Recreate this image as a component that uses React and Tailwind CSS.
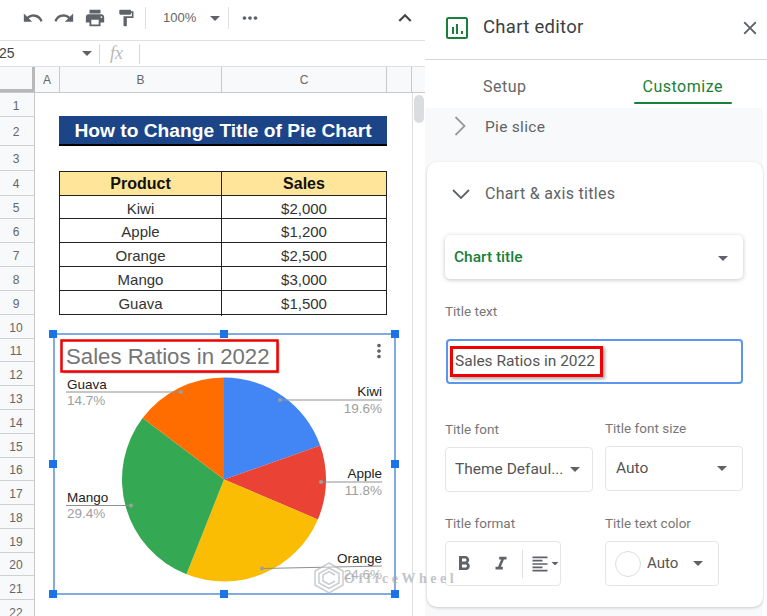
import React from "react";
import {
  MdUndo,
  MdRedo,
  MdPrint,
  MdFormatPaint,
  MdMoreHoriz,
  MdKeyboardArrowUp,
  MdClose,
  MdFormatBold,
  MdFormatItalic,
  MdFormatAlignLeft,
  MdMoreVert,
} from "react-icons/md";

const rowHeights = [24, 29, 25, 25, 23, 24, 24, 24, 24, 24, 23, 24, 24, 24, 24, 23, 24, 24, 24, 23, 24, 24];

const products = [
  ["Kiwi", "$2,000", "h-[23px]"],
  ["Apple", "$1,200", "h-[24px]"],
  ["Orange", "$2,500", "h-[24px]"],
  ["Mango", "$3,000", "h-[24px]"],
  ["Guava", "$1,500", "h-[23px]"],
];

const slices = [
  { share: 19.6, color: "#4285f4" },
  { share: 11.8, color: "#ea4335" },
  { share: 24.6, color: "#fbbc04" },
  { share: 29.3, color: "#34a853" },
  { share: 14.7, color: "#ff6d01" },
];

const Caret = ({ className = "" }) => (
  <svg width="10" height="5" viewBox="0 0 10 5" className={className}>
    <path d="M0 0h10L5 5z" fill="#5f6368" />
  </svg>
);

const slicePaths = () => {
  const cx = 224;
  const cy = 479.5;
  const r = 102;
  let total = 0;
  return slices.map((s) => {
    const a0 = (total / 100) * 2 * Math.PI;
    total += s.share;
    const a1 = (total / 100) * 2 * Math.PI;
    const large = s.share > 50 ? 1 : 0;
    const x0 = cx + r * Math.sin(a0);
    const y0 = cy - r * Math.cos(a0);
    const x1 = cx + r * Math.sin(a1);
    const y1 = cy - r * Math.cos(a1);
    return { d: `M${cx} ${cy}L${x0} ${y0}A${r} ${r} 0 ${large} 1 ${x1} ${y1}Z`, color: s.color };
  });
};

const Leader = ({ points, dot }) => (
  <g>
    <polyline points={points} fill="none" stroke="#8f8f8f" strokeWidth="1" />
    <circle cx={dot[0]} cy={dot[1]} r="2" fill="#9e9e9e" />
  </g>
);

const PieChart = () => (
  <svg
    className="absolute left-[45px] top-[258px]"
    width="360"
    height="280"
    viewBox="45 325 360 280"
    style={{ fontFamily: "'Liberation Sans', Arial, sans-serif" }}
  >
    <rect x="54" y="334" width="341" height="260" fill="#fff" stroke="#5b8fd6" strokeWidth="1.5" />
    {slicePaths().map((s) => (
      <path key={s.color} d={s.d} fill={s.color} />
    ))}

    <rect x="63.5" y="342.5" width="216" height="31" fill="#000" opacity="0.25" />
    <rect x="61.5" y="340.5" width="216" height="31" fill="#fff" stroke="#f00000" strokeWidth="2.5" />
    <text x="66" y="364" fontSize="22.2" fill="#757575">Sales Ratios in 2022</text>

    <Leader points="66,392 181,392" dot={[181, 392]} />
    <Leader points="280,400 382,400" dot={[280, 400]} />
    <Leader points="321,482 382,482" dot={[321, 482]} />
    <Leader points="66,505.5 131,505.5" dot={[131, 505.5]} />
    <Leader points="262,568.5 382,566" dot={[262, 568.5]} />

    <text x="67" y="389" fontSize="13.5" fill="#222">Guava</text>
    <text x="67" y="405" fontSize="13.5" fill="#9e9e9e">14.7%</text>
    <text x="382" y="396" fontSize="13.5" fill="#222" textAnchor="end">Kiwi</text>
    <text x="382" y="413" fontSize="13.5" fill="#9e9e9e" textAnchor="end">19.6%</text>
    <text x="382" y="478" fontSize="13.5" fill="#222" textAnchor="end">Apple</text>
    <text x="382" y="495" fontSize="13.5" fill="#9e9e9e" textAnchor="end">11.8%</text>
    <text x="67" y="502" fontSize="13.5" fill="#222">Mango</text>
    <text x="67" y="518" fontSize="13.5" fill="#9e9e9e">29.4%</text>
    <text x="382" y="563" fontSize="13.5" fill="#222" textAnchor="end">Orange</text>
    <text x="382" y="579" fontSize="13.5" fill="#b5b5b5" textAnchor="end">24.6%</text>

    <g fill="#1a73e8">
      {[53, 224, 395].map((x) =>
        [334, 464, 594].map((y) =>
          x === 224 && y === 464 ? null : <rect key={`${x}-${y}`} x={x - 4} y={y - 4} width="8" height="8" />
        )
      )}
    </g>
    <g transform="translate(-43 0)">
      <MdMoreVert x="411" y="340" size="22" color="#5f6368" />
    </g>
  </svg>
);

const Watermark = () => (
  <div className="absolute left-[312px] top-[562px] flex items-center opacity-70">
    <svg width="34" height="32" viewBox="0 0 34 32" fill="none" stroke="#b4b8bc" strokeWidth="1.5">
      <path d="M17 1l14 8v14l-14 8-14-8V9z" fill="#ffffff" fillOpacity="0.55" />
      <path d="M17 6l10 5.500v9.500l-10 5.500-10-5.500v-9.500z" />
      <path d="M23 13l-6-3.500-6 3.500v6l6 3.500 6-3.500" />
    </svg>
    <span className="-ml-[2px] font-['Liberation_Serif',serif] text-[14px] font-bold tracking-[3.500px] text-[#a9adb1] whitespace-nowrap">
      OfficeWheel
    </span>
  </div>
);

const Sheet = () => (
  <div className="relative h-[549px] overflow-hidden">
    <div className="flex h-[26px] border-b border-[#c8c8c8] text-[12px] text-[#666] bg-[#f8f9fa]">
      <div className="w-[35px] border-r-[3px] border-b-[3px] border-[#b8b8b8]" />
      <div className="w-[25px] border-r border-[#c8c8c8] flex items-center justify-center">A</div>
      <div className="w-[162px] border-r border-[#c8c8c8] flex items-center justify-center">B</div>
      <div className="w-[165px] border-r border-[#c8c8c8] flex items-center justify-center">C</div>
      <div className="w-[25px] border-r border-[#c8c8c8]" />
    </div>

    <div className="flex">
      <div className="w-[35px] bg-[#f8f9fa] border-r border-[#c8c8c8]">
        {rowHeights.map((h, i) => (
          <div
            key={i}
            style={{ height: h }}
            className="flex items-center justify-center border-b border-[#d0d0d0] text-[12px] text-[#666] pr-[2px] pt-[2px]"
          >
            {i + 1}
          </div>
        ))}
      </div>

      <div className="w-[377px] pl-[24px]">
        <div className="h-[23px]" />
        <div className="w-[328px] h-[30px] pt-[2px] bg-[#1c4587] border-b-2 border-black flex items-center justify-center text-[19.200px] font-bold text-white">
          How to Change Title of Pie Chart
        </div>
        <div className="h-[25px]" />
        <div className="w-[328px] border border-[#222] text-[#333]">
          <div className="grid grid-cols-[162px_1fr] h-[24px] bg-[#ffe599] font-bold text-[16px] text-[#111] border-b border-[#222]">
            <div className="border-r border-[#222] flex items-center justify-center">Product</div>
            <div className="flex items-center justify-center">Sales</div>
          </div>
          {products.map(([name, sales, height], i) => (
            <div
              key={name}
              className={`grid grid-cols-[162px_1fr] text-[15px] ${height} ${i < 4 ? "border-b border-[#222]" : ""}`}
            >
              <div className="border-r border-[#222] flex items-center justify-center pt-[2px]">{name}</div>
              <div className="flex items-center justify-center pt-[2px]">{sales}</div>
            </div>
          ))}
        </div>
      </div>

      <div className="w-[13px] border-l border-[#e0e0e0] pl-[1px] pt-[2px]">
        <div className="w-[10px] h-[28px] rounded-full bg-[#dadce0]" />
      </div>
    </div>

    <PieChart />
  </div>
);

const SpreadsheetPane = () => (
  <div className="w-[425px] shrink-0">
    <div className="h-[41px] border-b border-[#e0e0e0] flex items-center pb-[4px] text-[#5f6368]">
      <MdUndo size={22} className="ml-[22px]" />
      <MdRedo size={22} className="ml-[9px]" />
      <MdPrint size={22} className="ml-[9px]" />
      <MdFormatPaint size={20} className="ml-[10px]" />
      <div className="w-px h-[22px] bg-[#e0e0e0] ml-[9px]" />
      <span className="text-[13px] ml-[17px] text-[#666]">100%</span>
      <Caret className="ml-[14px]" />
      <div className="w-px h-[22px] bg-[#e0e0e0] ml-[8px]" />
      <MdMoreHoriz size={22} className="ml-[10px]" />
      <MdKeyboardArrowUp size={26} className="ml-[131px] text-[#444]" />
    </div>
    <div className="h-[26px] border-b border-[#e0e0e0] flex items-center text-[#444]">
      <span className="text-[14px] -ml-[1px] w-[83px]">25</span>
      <Caret />
      <div className="w-px h-[20px] bg-[#d8d8d8] ml-[7px]" />
      <span className="font-['Liberation_Serif',serif] italic text-[18px] text-[#b8b8b8] ml-[10px] w-[29px]">fx</span>
      <div className="w-px h-[20px] bg-[#d8d8d8]" />
    </div>
    <Sheet />
  </div>
);

const FieldLabel = ({ children, className = "" }) => (
  <div className={`text-[13.5px] leading-[18px] text-[#777] ${className}`}>{children}</div>
);

const SelectBox = ({ children, className = "" }) => (
  <div className={`h-[45px] rounded-[4px] border border-[#e3e5e7] flex items-center justify-between bg-white text-[15.500px] text-[#555] ${className}`}>
    {children}
  </div>
);

const EditorPane = () => (
  <div className="w-[342px] h-[616px] flex flex-col bg-white font-['Roboto',sans-serif]">
    <div className="h-[60px] shrink-0 border-b border-[#d8d8d8] flex items-center pb-[4px] pl-[21px] pr-[6px]">
      <svg width="22" height="22" viewBox="0 0 22 22">
        <rect x="1" y="1" width="20" height="20" rx="1.500" fill="none" stroke="#188038" strokeWidth="2" />
        <path d="M6 10h2v7H6zM10 7h2v10h-2zM15 14h2v3h-2z" fill="#188038" />
      </svg>
      <span className="ml-[15px] text-[18.500px] tracking-[0.3px] text-[#3c4043]">Chart editor</span>
      <MdClose size={22} className="ml-auto text-[#5f6368]" />
    </div>

    <div className="h-[48px] shrink-0 flex pl-[58px] pt-[15px] text-[16px] tracking-[0.5px]">
      <span className="text-[#666]">Setup</span>
      <div className="ml-[116px] relative text-[#188038]">
        Customize
        <div className="absolute -left-[9px] -right-[9px] top-[27px] h-[2px] rounded-full bg-[#188038]" />
      </div>
    </div>

    <div className="flex-1 w-[338px] bg-[#f8f9fa] flex flex-col pb-[9px]">
      <div className="h-[54px] shrink-0 flex items-start pt-[8px] pl-[29px] text-[15.500px] tracking-[0.3px] text-[#5f6368]">
        <svg width="12" height="20" viewBox="0 0 12 20" fill="none" stroke="#9a9a9a" strokeWidth="1.800">
          <path d="M1.500 1l9 9-9 9" />
        </svg>
        <span className="ml-[19px]">Pie slice</span>
      </div>

      <div className="flex-1 ml-[2px] rounded-[10px] bg-white shadow-[0_1px_3px_rgba(60,64,67,0.25)] px-[18px]">
        <div className="h-[62px] pt-[2px] flex items-center text-[16px] tracking-[0.3px] text-[#5f6368]">
          <svg width="18" height="11" viewBox="0 0 18 11" fill="none" stroke="#5f6368" strokeWidth="1.800" className="ml-[7px]">
            <path d="M1 1l8 8 8-8" />
          </svg>
          <span className="ml-[15px]">Chart &amp; axis titles</span>
        </div>

        <div className="h-[44px] w-[298px] mt-[11px] pt-[2px] rounded-[5px] bg-white shadow-[0_1px_4px_rgba(60,64,67,0.3)] flex items-center justify-between pl-[9px] pr-[15px] text-[15.500px] font-medium text-[#188038]">
          Chart title
          <Caret />
        </div>

        <FieldLabel className="mt-[23px]">Title text</FieldLabel>
        <div className="h-[45px] w-[297px] mt-[19px] ml-px rounded-[4px] border-2 border-[#5b95f0] flex items-center pl-[2px]">
          <span className="border-[3px] border-[#f00000] shadow-[2px_2px_3px_rgba(0,0,0,0.35)] h-[31px] w-[153px] flex items-center pl-[2px] text-[15.500px] text-[#555] whitespace-nowrap">
            Sales Ratios in 2022
          </span>
        </div>

        <div className="grid grid-cols-[148px_138px] gap-x-[12px] mt-[36px]">
          <div>
            <FieldLabel>Title font</FieldLabel>
            <SelectBox className="mt-[9px] pl-[9px] pr-[12px]">
              Theme Defaul...
              <Caret />
            </SelectBox>
          </div>
          <div className="-mt-px">
            <FieldLabel>Title font size</FieldLabel>
            <SelectBox className="mt-[9px] pl-[10px] pr-[15px]">
              Auto
              <Caret />
            </SelectBox>
          </div>
        </div>

        <div className="grid grid-cols-[148px_138px] gap-x-[12px] mt-[22px]">
          <div>
            <FieldLabel>Title format</FieldLabel>
            <div className="w-[116px] h-[45px] mt-[9px] rounded-[4px] border border-[#e3e5e7] flex items-center text-[#5f6368]">
              <MdFormatBold size={24} className="ml-[6px]" />
              <MdFormatItalic size={22} className="ml-[14px]" />
              <div className="w-px h-[28px] bg-[#e0e0e0] ml-[10px]" />
              <MdFormatAlignLeft size={20} className="ml-[7px]" />
              <Caret className="scale-75" />
            </div>
          </div>
          <div>
            <FieldLabel>Title text color</FieldLabel>
            <div className="w-[114px] h-[45px] mt-[9px] rounded-[4px] border border-[#e3e5e7] flex items-center text-[15px] text-[#555]">
              <div className="w-[26px] h-[26px] rounded-full border border-[#dadce0] ml-[9px]" />
              <span className="ml-[6px]">Auto</span>
              <Caret className="ml-[15px]" />
            </div>
          </div>
        </div>
      </div>
    </div>
  </div>
);

export default function App() {
  return (
    <div className="relative w-[767px] h-[616px] overflow-hidden bg-white flex font-['Liberation_Sans',Arial,sans-serif]">
      <SpreadsheetPane />
      <EditorPane />
      <Watermark />
    </div>
  );
}
